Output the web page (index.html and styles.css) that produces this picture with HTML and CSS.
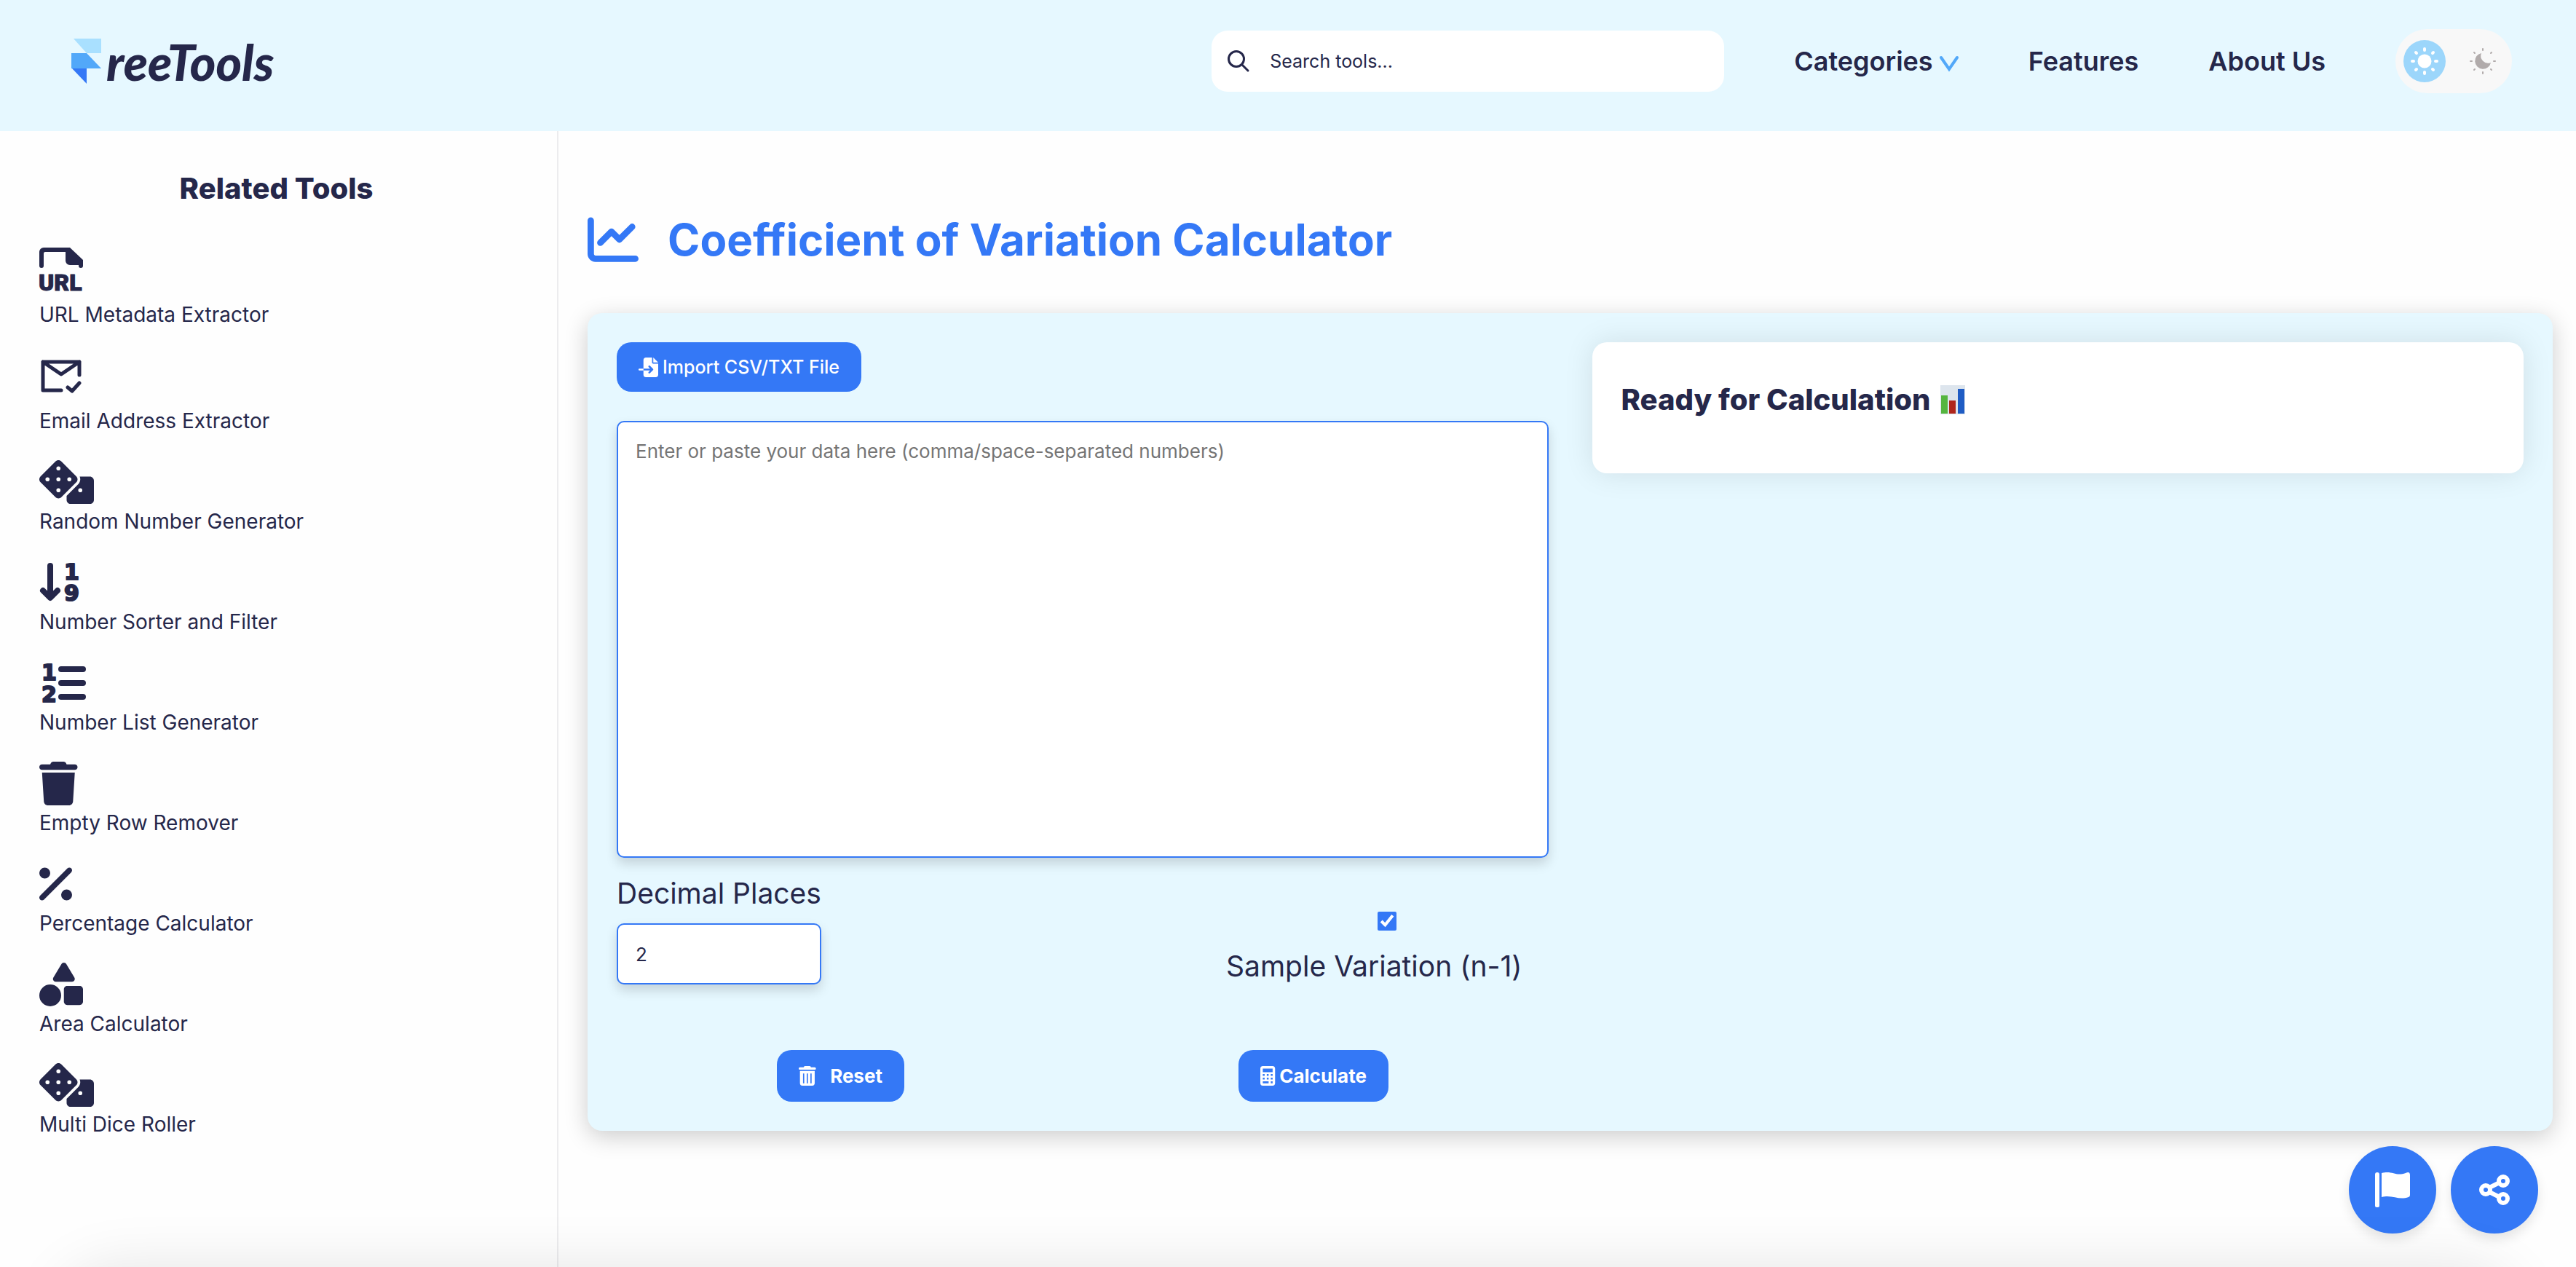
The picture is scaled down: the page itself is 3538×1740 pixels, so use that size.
FILE: index.html
```html
<!DOCTYPE html>
<html lang="en">
<head>
    <meta charset="UTF-8">
    <meta name="viewport" content="width=device-width, initial-scale=1.0">
    <title>Coefficient of Variation Calculator</title>
    <link rel="stylesheet" href="styles.css">
</head>
<body>

<!-- Shared icons -->
<svg class="sprite" aria-hidden="true">
    <symbol id="dice" viewBox="0 0 640 512">
        <path fill-rule="evenodd" d="M592 192H473.26c12.69 29.59 7.12 65.2-17 89.32L320 417.58V464c0 26.51 21.49 48 48 48h224c26.51 0 48-21.49 48-48V240c0-26.51-21.49-48-48-48zM480 328a24 24 0 1 1 0 48 24 24 0 1 1 0-48zM433.63 189.3L258.7 14.37c-19.16-19.16-50.23-19.16-69.39 0L14.37 189.3c-19.16 19.16-19.16 50.23 0 69.39L189.3 433.63c19.16 19.16 50.23 19.16 69.39 0L433.63 258.7c19.16-19.17 19.16-50.24 0-69.4zM96 200a24 24 0 1 1 0 48 24 24 0 1 1 0-48zM224 200a24 24 0 1 1 0 48 24 24 0 1 1 0-48zM352 200a24 24 0 1 1 0 48 24 24 0 1 1 0-48zM224 72a24 24 0 1 1 0 48 24 24 0 1 1 0-48zM224 328a24 24 0 1 1 0 48 24 24 0 1 1 0-48z"/>
    </symbol>
</svg>

<div class="page">
    <header class="navbar">
        <a class="logo" href="#">
            <svg class="logo-mark" viewBox="0 0 42 62" aria-hidden="true">
                <path fill="#a9e0ff" d="M3 0H41V20H21z"/>
                <path fill="#52a8f9" d="M0 20H21L41 41H0z"/>
                <path fill="#3478f6" d="M1 41H21V62z"/>
            </svg>
            <span class="logo-text">reeTools</span>
        </a>
        <div class="nav-right">
            <label class="search">
                <svg class="search-icon" viewBox="0 0 30 30" aria-hidden="true">
                    <circle cx="12" cy="12" r="10.5"/>
                    <path d="M20 20l8 8"/>
                </svg>
                <input type="text" placeholder="Search tools..." aria-label="Search tools">
            </label>
            <nav class="nav-links">
                <a href="#">Categories
                    <svg class="chevron" viewBox="0 0 26 20" aria-hidden="true"><path d="M2 2l11 16L24 2"/></svg>
                </a>
                <a href="#">Features</a>
                <a href="#">About Us</a>
            </nav>
            <button class="theme-toggle" aria-label="Toggle theme">
                <span class="sun">
                    <svg viewBox="0 0 40 40" aria-hidden="true">
                        <circle cx="20" cy="20" r="9.5"/>
                        <path class="rays" d="M20 3v2M20 35v2M3 20h2M35 20h2M8 8l1 1M31 31l1 1M8 32l1-1M31 9l1-1"/>
                    </svg>
                </span>
                <span class="moon">
                    <svg viewBox="0 0 40 40" aria-hidden="true">
                        <path d="M18 9a11 11 0 1 0 13 13a10 10 0 0 1-13-13z"/>
                        <path class="rays" d="M20 3v2M20 35v2M3 20h2M35 20h2M8 8l1 1M31 31l1 1M8 32l1-1M31 9l1-1"/>
                    </svg>
                </span>
            </button>
        </div>
    </header>

    <div class="layout">
        <aside class="sidebar">
            <h2>Related Tools</h2>
            <ul class="tool-list">
                <li>
                    <a class="spaced" href="#">
                        <svg viewBox="0 0 60 60" aria-hidden="true">
                            <path d="M0 25V6a6 6 0 0 1 6-6H42L60 17V25a3 3 0 0 1-6 0V24H42a6 6 0 0 1-6-6V6H8a2 2 0 0 0-2 2V25a3 3 0 0 1-6 0z"/>
                            <text class="icon-text" x="-1" y="59">URL</text>
                        </svg>
                        URL Metadata Extractor
                    </a>
                </li>
                <li>
                    <a class="spaced" href="#">
                        <svg class="outline" viewBox="0 0 60 60" aria-hidden="true">
                            <path d="M30 50H5V11H55V29M5 11L30 28 55 11M39 46L45 51 55 40"/>
                        </svg>
                        Email Address Extractor
                    </a>
                </li>
                <li>
                    <a href="#">
                        <svg viewBox="0 0 640 512" aria-hidden="true"><use href="#dice"/></svg>
                        Random Number Generator
                    </a>
                </li>
                <li>
                    <a href="#">
                        <svg viewBox="0 0 60 60" aria-hidden="true">
                            <path class="arrow" d="M15 7V50M5 41L15 51 25 41"/>
                            <text class="icon-digit" x="34" y="26">1</text>
                            <text class="icon-digit" x="34" y="55">9</text>
                        </svg>
                        Number Sorter and Filter
                    </a>
                </li>
                <li>
                    <a href="#">
                        <svg viewBox="0 0 66 60" aria-hidden="true">
                            <text class="icon-digit" x="3" y="26">1</text>
                            <text class="icon-digit" x="3" y="56">2</text>
                            <path class="list-lines" d="M30 11H60M30 30H60M30 49H60"/>
                        </svg>
                        Number List Generator
                    </a>
                </li>
                <li>
                    <a href="#">
                        <svg viewBox="0 0 448 512" aria-hidden="true"><path d="M135.2 17.7L128 32H32C14.3 32 0 46.3 0 64S14.3 96 32 96H416c17.7 0 32-14.3 32-32s-14.3-32-32-32H320l-7.2-14.3C307.4 6.8 296.3 0 284.2 0H163.8c-12.1 0-23.2 6.8-28.6 17.7zM416 128H32L53.2 467c1.6 25.3 22.6 45 47.9 45H346.9c25.3 0 46.3-19.7 47.9-45L416 128z"/></svg>
                        Empty Row Remover
                    </a>
                </li>
                <li>
                    <a href="#">
                        <svg viewBox="0 0 384 512" aria-hidden="true"><path d="M374.6 118.6c12.5-12.5 12.5-32.8 0-45.3s-32.8-12.5-45.3 0l-320 320c-12.5 12.5-12.5 32.8 0 45.3s32.8 12.5 45.3 0l320-320zM128 128A64 64 0 1 0 0 128a64 64 0 1 0 128 0zM384 384a64 64 0 1 0 -128 0 64 64 0 1 0 128 0z"/></svg>
                        Percentage Calculator
                    </a>
                </li>
                <li>
                    <a href="#">
                        <svg viewBox="0 0 512 512" aria-hidden="true"><path d="M315.4 15.5C309.7 5.9 299.2 0 288 0s-21.7 5.9-27.4 15.5l-96 160c-5.9 9.9-6.1 22.2-.4 32.2s16.3 16.2 27.8 16.2H384c11.5 0 22.2-6.2 27.8-16.2s5.5-22.3-.4-32.2l-96-160zM288 312V456c0 22.1 17.9 40 40 40H472c22.1 0 40-17.9 40-40V312c0-22.1-17.9-40-40-40H328c-22.1 0-40 17.9-40 40zM128 512a128 128 0 1 0 0-256 128 128 0 1 0 0 256z"/></svg>
                        Area Calculator
                    </a>
                </li>
                <li>
                    <a href="#">
                        <svg viewBox="0 0 640 512" aria-hidden="true"><use href="#dice"/></svg>
                        Multi Dice Roller
                    </a>
                </li>
            </ul>
        </aside>

        <main class="content">
            <h1>
                <svg viewBox="0 0 512 512" aria-hidden="true"><path d="M64 64c0-17.7-14.3-32-32-32S0 46.3 0 64V400c0 44.2 35.8 80 80 80H480c17.7 0 32-14.3 32-32s-14.3-32-32-32H80c-8.8 0-16-7.2-16-16V64zm406.6 86.6c12.5-12.5 12.5-32.8 0-45.3s-32.8-12.5-45.3 0L320 210.7l-57.4-57.4c-12.5-12.5-32.8-12.5-45.3 0l-112 112c-12.5 12.5-12.5 32.8 0 45.3s32.8 12.5 45.3 0L240 221.3l57.4 57.4c12.5 12.5 32.8 12.5 45.3 0l128-128z"/></svg>
                Coefficient of Variation Calculator
            </h1>

            <div class="calculator">
                <form class="inputs">
                    <button type="button" class="btn import">
                        <svg viewBox="0 0 512 512" aria-hidden="true"><path d="M128 64c0-35.3 28.7-64 64-64H352V128c0 17.7 14.3 32 32 32H512V448c0 35.3-28.7 64-64 64H192c-35.3 0-64-28.7-64-64V336H302.1l-39 39c-9.4 9.4-9.4 24.6 0 33.9s24.6 9.4 33.9 0l80-80c9.4-9.4 9.4-24.6 0-33.9l-80-80c-9.4-9.4-24.6-9.4-33.9 0s-9.4 24.6 0 33.9l39 39H128V64zm0 224v48H24c-13.3 0-24-10.7-24-24s10.7-24 24-24H128zM512 128H384V0L512 128z"/></svg>
                        Import CSV/TXT File
                    </button>
                    <textarea class="field data" placeholder="Enter or paste your data here (comma/space-separated numbers)" aria-label="Data"></textarea>
                    <div class="options">
                        <div class="option decimals">
                            <label for="decimals">Decimal Places</label>
                            <input class="field" type="text" inputmode="numeric" id="decimals" value="2">
                        </div>
                        <div class="option sample">
                            <input type="checkbox" id="sample" checked>
                            <label for="sample">Sample Variation (n-1)</label>
                        </div>
                    </div>
                    <div class="actions">
                        <button type="reset" class="btn reset">
                            <svg viewBox="0 0 448 512" aria-hidden="true"><path fill-rule="evenodd" d="M135.2 17.7C140.6 6.8 151.7 0 163.8 0H284.2c12.1 0 23.2 6.8 28.6 17.7L320 32h96c17.7 0 32 14.3 32 32s-14.3 32-32 32H32C14.3 96 0 81.7 0 64S14.3 32 32 32h96zM32 128H416V448c0 35.3-28.7 64-64 64H96c-35.3 0-64-28.7-64-64zM112 192V448h32V192zM208 192V448h32V192zM304 192V448h32V192z"/></svg>
                            Reset
                        </button>
                        <button type="button" class="btn calculate">
                            <svg viewBox="0 0 384 512" aria-hidden="true"><path fill-rule="evenodd" d="M64 0H320c35.3 0 64 28.7 64 64V448c0 35.3-28.7 64-64 64H64c-35.3 0-64-28.7-64-64V64C0 28.7 28.7 0 64 0zM64 64V160H320V64zM64 208V256H112V208zM168 208V256H216V208zM272 208V256H320V208zM64 304V352H112V304zM168 304V352H216V304zM272 304V352H320V304zM64 400V448H216V400zM272 400V448H320V400z"/></svg>
                            Calculate
                        </button>
                    </div>
                </form>

                <section class="results">
                    <h2>
                        Ready for Calculation
                        <svg viewBox="0 0 34 40" aria-hidden="true">
                            <path fill="#dde5ed" d="M0 0H34V40H0z"/>
                            <path fill="#55b53f" d="M1 14H10V39H1z"/>
                            <path fill="#b0261c" d="M12 21H21V39H12z"/>
                            <path fill="#1f5cc4" d="M24 5H33V39H24z"/>
                        </svg>
                    </h2>
                </section>
            </div>
        </main>
    </div>

    <div class="floating">
        <button aria-label="Report">
            <svg viewBox="0 0 48 48" aria-hidden="true"><path d="M0 3a3 3 0 0 1 6 0V46a2 2 0 0 1-2 2H2a2 2 0 0 1-2-2zM9 1C24-3 28 6 42 1 46-1 48 0 48 4V31a3 3 0 0 1-2 3C32 39 24 30 9 34z"/></svg>
        </button>
        <button aria-label="Share">
            <svg class="share" viewBox="0 0 48 48" aria-hidden="true">
                <circle cx="12" cy="24" r="6"/>
                <circle cx="36" cy="12" r="6"/>
                <circle cx="36" cy="36" r="6"/>
                <path d="M17 21L31 14M17 27L31 34"/>
            </svg>
        </button>
    </div>

    <footer class="footer"></footer>
</div>

</body>
</html>
```

FILE: styles.css
```css
* {
    box-sizing: border-box;
}

body {
    margin: 0;
    font-family: Inter, "Open Sans", sans-serif;
    font-size: 28px;
    color: #25274a;
    background-color: #fefefe;
}

a {
    color: inherit;
    text-decoration: none;
}

button,
input,
textarea {
    font: inherit;
    color: inherit;
}

svg {
    fill: currentColor;
    flex: none;
    overflow: visible;
}

.sprite {
    display: none;
}

.page {
    position: relative;
    display: flex;
    flex-direction: column;
    min-height: 100vh;
    overflow: hidden;
}

/* Navbar */
.navbar {
    display: flex;
    justify-content: space-between;
    align-items: flex-start;
    padding: 40px 88px 52px 98px;
    background-color: #e6f8ff;
}

.logo {
    display: flex;
    align-items: center;
    height: 88px;
    gap: 6px;
}

.logo-mark {
    width: 42px;
    height: 62px;
}

.logo-text {
    font-family: Lato, sans-serif;
    font-size: 68px;
    font-style: italic;
    font-weight: 900;
}

.nav-right {
    display: flex;
    align-items: center;
    gap: 96px;
    height: 88px;
}

.search {
    display: flex;
    align-items: center;
    gap: 28px;
    width: 704px;
    height: 84px;
    padding: 0 22px;
    border-radius: 22px;
    background-color: #fff;
}

.search-icon {
    width: 30px;
    height: 30px;
    fill: none;
    stroke: currentColor;
    stroke-width: 3;
    stroke-linecap: round;
}

.search input {
    flex: 1;
    border: none;
    outline: none;
    padding: 0;
    font-size: 25px;
    background: none;
}

.search input::placeholder {
    color: #25274a;
}

.nav-links {
    display: flex;
    gap: 96px;
    font-size: 36px;
    font-weight: 600;
}

.chevron {
    width: 26px;
    height: 20px;
    fill: none;
    stroke: #52a8f9;
    stroke-width: 4;
    stroke-linecap: round;
}

.theme-toggle {
    display: flex;
    justify-content: space-between;
    align-items: center;
    width: 160px;
    height: 88px;
    padding: 0 11px;
    border: none;
    border-radius: 44px;
    background-color: #f8f8f8;
}

.theme-toggle span {
    display: flex;
    justify-content: center;
    align-items: center;
    width: 58px;
    height: 58px;
    border-radius: 50%;
}

.theme-toggle svg {
    width: 40px;
    height: 40px;
}

.theme-toggle .sun {
    color: #fff;
    background-color: #9cd6fb;
}

.theme-toggle .moon {
    color: #b1abab;
}

.rays {
    fill: none;
    stroke: currentColor;
    stroke-width: 4;
    stroke-linecap: round;
}

.moon .rays {
    stroke-width: 2;
}

/* Sidebar */
.layout {
    display: flex;
    flex: 1;
}

.sidebar {
    flex: none;
    width: 767px;
    padding: 54px 60px 60px 54px;
    border-right: 2px solid #ececee;
}

.sidebar h2 {
    margin: 0 0 56px;
    font-size: 40px;
    font-weight: 800;
    line-height: 50px;
    text-align: center;
}

.tool-list {
    margin: 0;
    padding: 0;
    list-style: none;
}

.tool-list li {
    margin-bottom: 34px;
}

.tool-list a {
    display: flex;
    flex-direction: column;
    align-items: flex-start;
    gap: 4px;
    line-height: 40px;
}

.tool-list a.spaced {
    gap: 12px;
}

.tool-list svg {
    height: 60px;
}

.outline {
    fill: none;
    stroke: currentColor;
    stroke-width: 5;
    stroke-linecap: round;
    stroke-linejoin: round;
}

.icon-text {
    font: 900 32px Roboto, sans-serif;
    stroke: currentColor;
    stroke-width: 1;
    stroke-linejoin: round;
}

.icon-digit {
    font: bold 30px "DejaVu Sans", sans-serif;
    stroke: currentColor;
    stroke-width: 2;
    stroke-linejoin: round;
}

.arrow {
    fill: none;
    stroke: currentColor;
    stroke-width: 8;
    stroke-linecap: round;
    stroke-linejoin: round;
}

.list-lines {
    stroke: currentColor;
    stroke-width: 8;
    stroke-linecap: round;
}

/* Main content */
.content {
    flex: 1;
    padding: 108px 32px 60px 40px;
}

h1 {
    display: flex;
    align-items: center;
    gap: 40px;
    margin: 0 0 60px;
    font-size: 60px;
    font-weight: 700;
    line-height: 82px;
    color: #3478f6;
}

h1 svg {
    width: 70px;
    height: 70px;
}

.calculator {
    display: grid;
    grid-template-columns: 1fr 1fr;
    align-items: start;
    gap: 60px;
    padding: 40px;
    border-radius: 20px;
    background-color: #e6f8ff;
    box-shadow: 0 8px 32px rgba(0, 0, 0, 0.2);
}

.inputs {
    display: flex;
    flex-direction: column;
    align-items: stretch;
}

.btn {
    display: flex;
    align-items: center;
    gap: 6px;
    height: 71px;
    padding: 0 30px;
    border: none;
    border-radius: 20px;
    font-size: 26px;
    font-weight: 700;
    color: #fff;
    background-color: #3478f6;
    cursor: pointer;
}

.btn svg {
    height: 27px;
}

.btn.import {
    align-self: flex-start;
    height: 68px;
    font-size: 25px;
    font-weight: 500;
}

.btn.reset {
    gap: 20px;
}

.field {
    padding: 24px;
    border: 2px solid #3478f6;
    border-radius: 10px;
    font-size: 26px;
    background-color: #fff;
    box-shadow: 0 8px 16px rgba(0, 0, 0, 0.15);
    outline: none;
}

.data {
    height: 600px;
    margin-top: 40px;
    resize: none;
}

.data::placeholder {
    color: #757575;
}

.options {
    display: flex;
    justify-content: space-between;
    margin-top: 24px;
    padding-right: 36px;
    font-size: 39px;
}

.option {
    display: flex;
    flex-direction: column;
}

.option label {
    line-height: 50px;
}

.decimals {
    gap: 16px;
    width: 281px;
    white-space: nowrap;
}

.decimals .field {
    width: 100%;
    height: 84px;
}

.sample {
    align-items: center;
    justify-content: flex-end;
    gap: 24px;
}

.sample input {
    width: 26px;
    height: 26px;
    margin: 0 0 0 36px;
    accent-color: #3478f6;
}

.actions {
    display: flex;
    justify-content: space-around;
    gap: 20px;
    margin-top: 90px;
}

.results {
    height: 180px;
    padding: 54px 40px;
    border-radius: 20px;
    background-color: #fff;
    box-shadow: 0 0 40px rgba(0, 0, 0, 0.1);
}

.results h2 {
    display: flex;
    align-items: center;
    gap: 14px;
    margin: 0;
    font-size: 40px;
    font-weight: 800;
    line-height: 50px;
}

.results h2 svg {
    width: 34px;
    height: 40px;
}

/* Floating buttons */
.floating {
    position: fixed;
    right: 52px;
    bottom: 46px;
    display: flex;
    gap: 20px;
}

.floating button {
    display: flex;
    justify-content: center;
    align-items: center;
    width: 120px;
    height: 120px;
    padding: 0;
    border: none;
    border-radius: 50%;
    color: #fff;
    background-color: #3478f6;
    box-shadow: 0 8px 16px rgba(0, 0, 0, 0.1);
    cursor: pointer;
}

.floating svg {
    width: 48px;
    height: 48px;
}

.share {
    fill: none;
    stroke: currentColor;
    stroke-width: 6;
}

/* Footer starts right under the first screen, its shadow shows above */
.footer {
    position: absolute;
    top: 100%;
    left: 80px;
    right: 80px;
    height: 200px;
    border-radius: 80px;
    box-shadow: 0 0 80px rgba(0, 0, 0, 0.1);
}
```
